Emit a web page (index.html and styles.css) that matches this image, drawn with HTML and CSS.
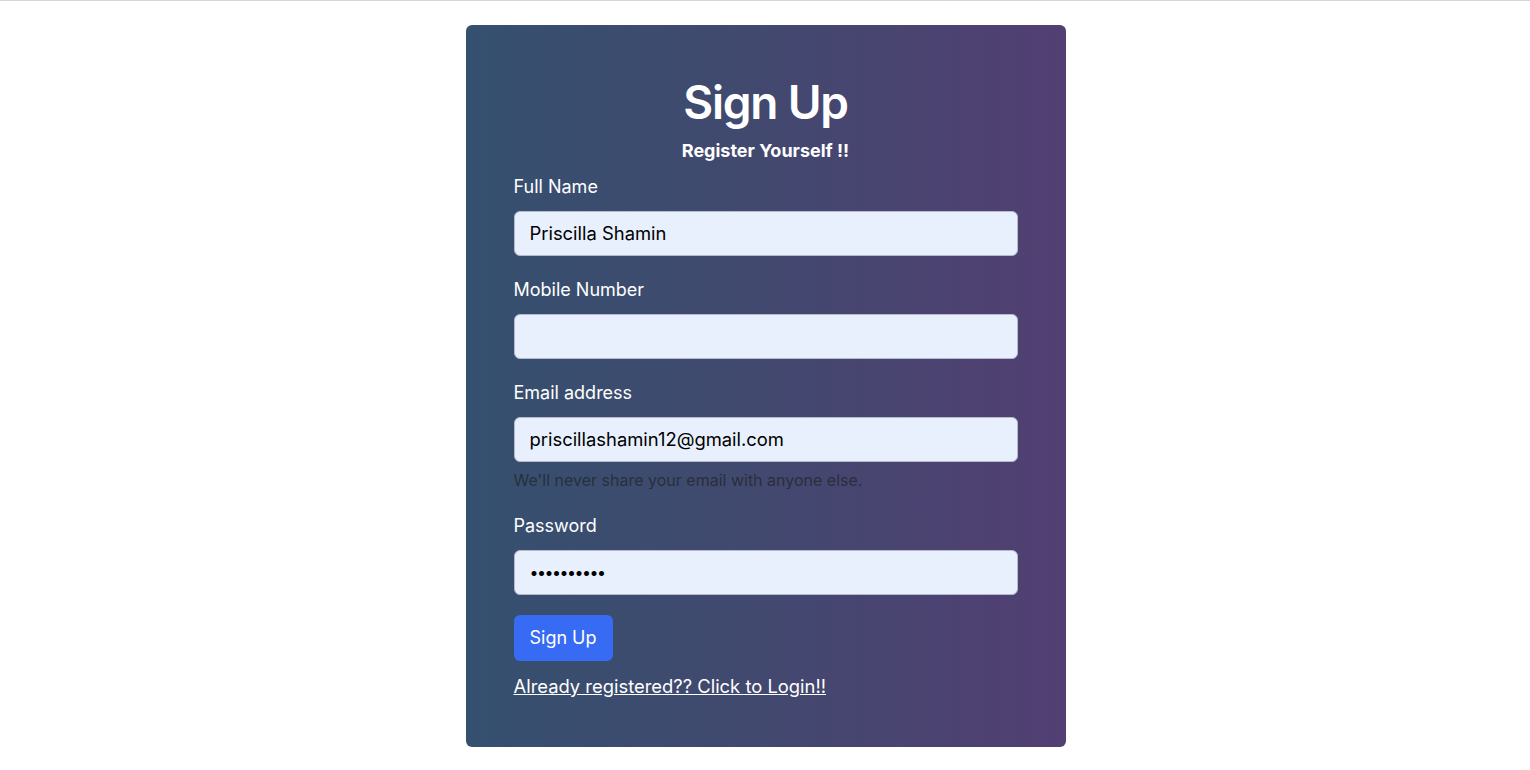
FILE: index.html
```html
<!DOCTYPE html>
<html lang="en">
<head>
<meta charset="utf-8">
<title>Sign Up</title>
<link rel="stylesheet" href="styles.css">
</head>
<body>
<div class="page">
  <div class="card">
    <h1 class="title">Sign Up</h1>
    <h5 class="subtitle">Register Yourself !!</h5>
    <form class="form">
      <div class="group">
        <label class="label" for="name">Full Name</label>
        <input class="input" id="name" type="text" value="Priscilla Shamin">
      </div>
      <div class="group">
        <label class="label" for="mobile">Mobile Number</label>
        <input class="input" id="mobile" type="text" value="">
      </div>
      <div class="group">
        <label class="label" for="email">Email address</label>
        <input class="input" id="email" type="email" value="priscillashamin12@gmail.com">
        <div class="help">We'll never share your email with anyone else.</div>
      </div>
      <div class="group group-last">
        <label class="label" for="password">Password</label>
        <input class="input input-password" id="password" type="password" value="1234567890">
      </div>
      <button class="btn" type="button">Sign Up</button>
      <a class="link" href="#">Already registered?? Click to Login!!</a>
    </form>
  </div>
</div>
</body>
</html>
```

FILE: styles.css
```css
html, body {
  margin: 0;
  padding: 0;
  background: #ffffff;
}

body {
  border-top: 1px solid #d6d6d6;
  font-family: Inter, "Liberation Sans", sans-serif;
  color: #ffffff;
}

.page {
  display: flex;
  justify-content: center;
  padding: 24px 0 0 1px;
}

.card {
  width: 600px;
  box-sizing: border-box;
  padding: 49px 48px 47px;
  border-radius: 6px;
  background: linear-gradient(90deg, #35506f 0%, #3f4a6e 40%, #523f73 100%);
}

.title {
  margin: 0;
  text-align: center;
  font-size: 46px;
  line-height: 57.6px;
  font-weight: 600;
  letter-spacing: -1.2px;
}

.subtitle {
  margin: 7px 0 0;
  text-align: center;
  font-size: 18px;
  line-height: 24px;
  font-weight: 700;
}

.form {
  display: flex;
  flex-direction: column;
  align-items: flex-start;
  margin-top: 10px;
}

.group {
  width: 100%;
  display: flex;
  flex-direction: column;
  margin-bottom: 20px;
}

.group-last {
  margin-bottom: 20px;
}

.label {
  font-size: 18px;
  line-height: 27px;
  margin-bottom: 11px;
}

.input {
  box-sizing: border-box;
  width: 100%;
  height: 45px;
  padding: 0 15px;
  border: 1px solid #b6b8cc;
  border-radius: 6px;
  background: #e8f0fe;
  color: #000000;
  font-family: Inter, "Liberation Sans", sans-serif;
  font-size: 18.4px;
  outline: none;
}

.input-password {
  letter-spacing: -1.5px;
  font-size: 16px;
}

.help {
  margin-top: 6px;
  font-size: 16px;
  line-height: 24px;
  color: rgba(33, 37, 41, 0.75);
}

.btn {
  height: 46px;
  width: 99px;
  padding: 0;
  border: none;
  border-radius: 6px;
  background: #376bf3;
  color: #ffffff;
  font-family: Inter, "Liberation Sans", sans-serif;
  font-size: 18px;
  cursor: pointer;
}

.link {
  margin-top: 12px;
  font-size: 18.4px;
  line-height: 27px;
  color: #ffffff;
  text-decoration: underline;
}
```
